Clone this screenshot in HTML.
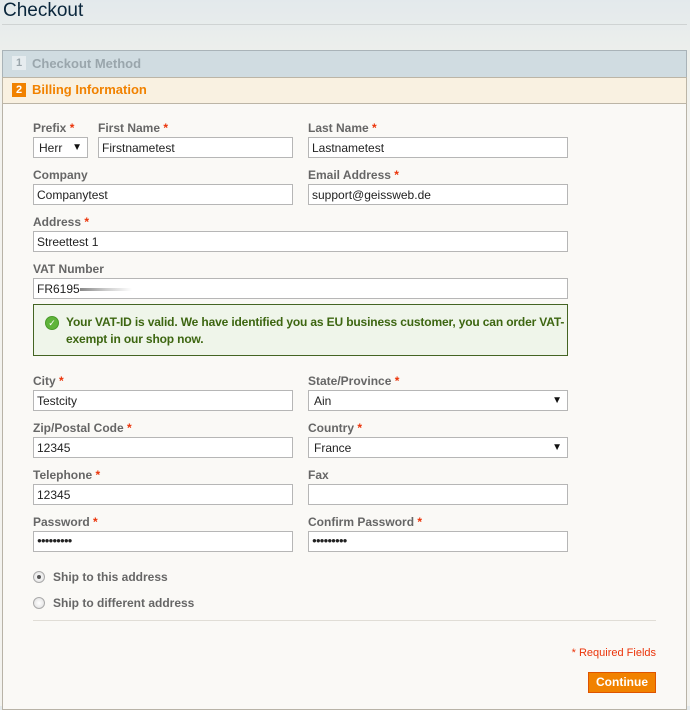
<!DOCTYPE html>
<html><head><meta charset="utf-8"><style>
*{box-sizing:border-box;margin:0;padding:0}
body{width:690px;height:706px;overflow:hidden;position:relative;font-family:"Liberation Sans",Arial,sans-serif;font-size:12px;background:linear-gradient(#e3e9ec,#eef0ec 60px,#f3f3ef 120px);}
.a{position:absolute}
h1{position:absolute;left:3px;top:0;font-size:19px;font-weight:normal;color:#0a263c}
.hr{position:absolute;left:2px;top:24px;width:685px;height:1px;background:#cfd3d3}
.box{position:absolute;left:2px;top:50px;width:685px;height:660px;border:1px solid #b8b3a7;background:linear-gradient(#f5f2ea,#faf9f6 50px)}
.s1{position:absolute;left:2px;top:50px;width:685px;height:28px;background:#d0dce1;border:1px solid #a9b3b8}
.s2{position:absolute;left:2px;top:77px;width:685px;height:27px;background:#f9f1e1;border:1px solid #bcb5a6}
.num{position:absolute;width:14px;height:14px;font-size:11px;font-weight:bold;text-align:center;line-height:14px}
.tt{position:absolute;font-size:13px;font-weight:bold}
label{position:absolute;font-weight:bold;color:#666;font-size:12px}
label i{font-style:normal;color:#eb340a}
.in{position:absolute;height:21px;border:1px solid #b6b6b6;background:#fff;padding:3px 0 0 3px;font-size:12px;color:#222}
.sel:after{content:"▼";position:absolute;right:5px;top:4px;font-size:10px;color:#111}
.pw{font-size:8px;letter-spacing:-1px;padding-top:4px}
.rad{position:absolute;width:12px;height:12px;border-radius:50%;border:1px solid #aaa;background:radial-gradient(#fff,#ddd)}
</style></head><body>
<h1>Checkout</h1><div class="hr"></div>
<div class="box"></div>
<div class="s1"><div class="num" style="left:9px;top:5px;background:#e6ecef;color:#9aa5ab">1</div><div class="tt" style="left:29px;top:5px;color:#9aa6ac">Checkout Method</div></div>
<div class="s2"><div class="num" style="left:9px;top:5px;background:#f18200;color:#fff">2</div><div class="tt" style="left:29px;top:4px;color:#f18200">Billing Information</div></div>

<label style="left:33px;top:121px">Prefix <i>*</i></label>
<div class="in sel" style="left:33px;top:137px;width:55px;padding-left:5px">Herr</div>
<label style="left:98px;top:121px">First Name <i>*</i></label>
<div class="in" style="left:98px;top:137px;width:195px">Firstnametest</div>
<label style="left:308px;top:121px">Last Name <i>*</i></label>
<div class="in" style="left:308px;top:137px;width:260px">Lastnametest</div>

<label style="left:33px;top:168px">Company</label>
<div class="in" style="left:33px;top:184px;width:260px">Companytest</div>
<label style="left:308px;top:168px">Email Address <i>*</i></label>
<div class="in" style="left:308px;top:184px;width:260px">support@geissweb.de</div>

<label style="left:33px;top:215px">Address <i>*</i></label>
<div class="in" style="left:33px;top:231px;width:535px">Streettest 1</div>
<label style="left:33px;top:262px">VAT Number</label>
<div class="in" style="left:33px;top:278px;width:535px">FR6195<span style="display:inline-block;width:52px;height:3px;vertical-align:middle;background:linear-gradient(90deg,#888,#ccc,#fff)"></span></div>

<div class="a" style="left:33px;top:304px;width:535px;height:52px;background:#eff5ea;border:1px solid #446423"></div>
<div class="a" style="left:45px;top:316px;width:14px;height:14px;border-radius:50%;background:#5fb43a;border:1px solid #4a9a2a;color:#fff;font-size:9px;text-align:center;line-height:12px">✓</div>
<div class="a" style="left:66px;top:314px;width:510px;white-space:nowrap;letter-spacing:-0.15px;font-weight:bold;color:#3d6611;line-height:17px">Your VAT-ID is valid. We have identified you as EU business customer, you can order VAT-<br>exempt in our shop now.</div>

<label style="left:33px;top:374px">City <i>*</i></label>
<div class="in" style="left:33px;top:390px;width:260px">Testcity</div>
<label style="left:308px;top:374px">State/Province <i>*</i></label>
<div class="in sel" style="left:308px;top:390px;width:260px;padding-left:5px">Ain</div>

<label style="left:33px;top:421px">Zip/Postal Code <i>*</i></label>
<div class="in" style="left:33px;top:437px;width:260px">12345</div>
<label style="left:308px;top:421px">Country <i>*</i></label>
<div class="in sel" style="left:308px;top:437px;width:260px;padding-left:5px">France</div>

<label style="left:33px;top:468px">Telephone <i>*</i></label>
<div class="in" style="left:33px;top:484px;width:260px">12345</div>
<label style="left:308px;top:468px">Fax</label>
<div class="in" style="left:308px;top:484px;width:260px"></div>

<label style="left:33px;top:515px">Password <i>*</i></label>
<div class="in pw" style="left:33px;top:531px;width:260px">●●●●●●●●●</div>
<label style="left:308px;top:515px">Confirm Password <i>*</i></label>
<div class="in pw" style="left:308px;top:531px;width:260px">●●●●●●●●●</div>

<div class="rad" style="left:33px;top:571px"><div style="width:4px;height:4px;background:#555;border-radius:50%;margin:3px"></div></div>
<label style="left:53px;top:570px">Ship to this address</label>
<div class="rad" style="left:33px;top:597px"></div>
<label style="left:53px;top:596px">Ship to different address</label>
<div class="a" style="left:33px;top:620px;width:623px;height:1px;background:#e0ddd6"></div>
<div class="a" style="left:560px;top:647px;width:96px;text-align:right;font-size:11px;color:#eb340a">* Required Fields</div>
<div class="a" style="left:588px;top:672px;width:68px;height:21px;background:#f18200;border:1px solid #de5400;color:#fff;font-weight:bold;text-align:center;line-height:19px">Continue</div>
</body></html>
